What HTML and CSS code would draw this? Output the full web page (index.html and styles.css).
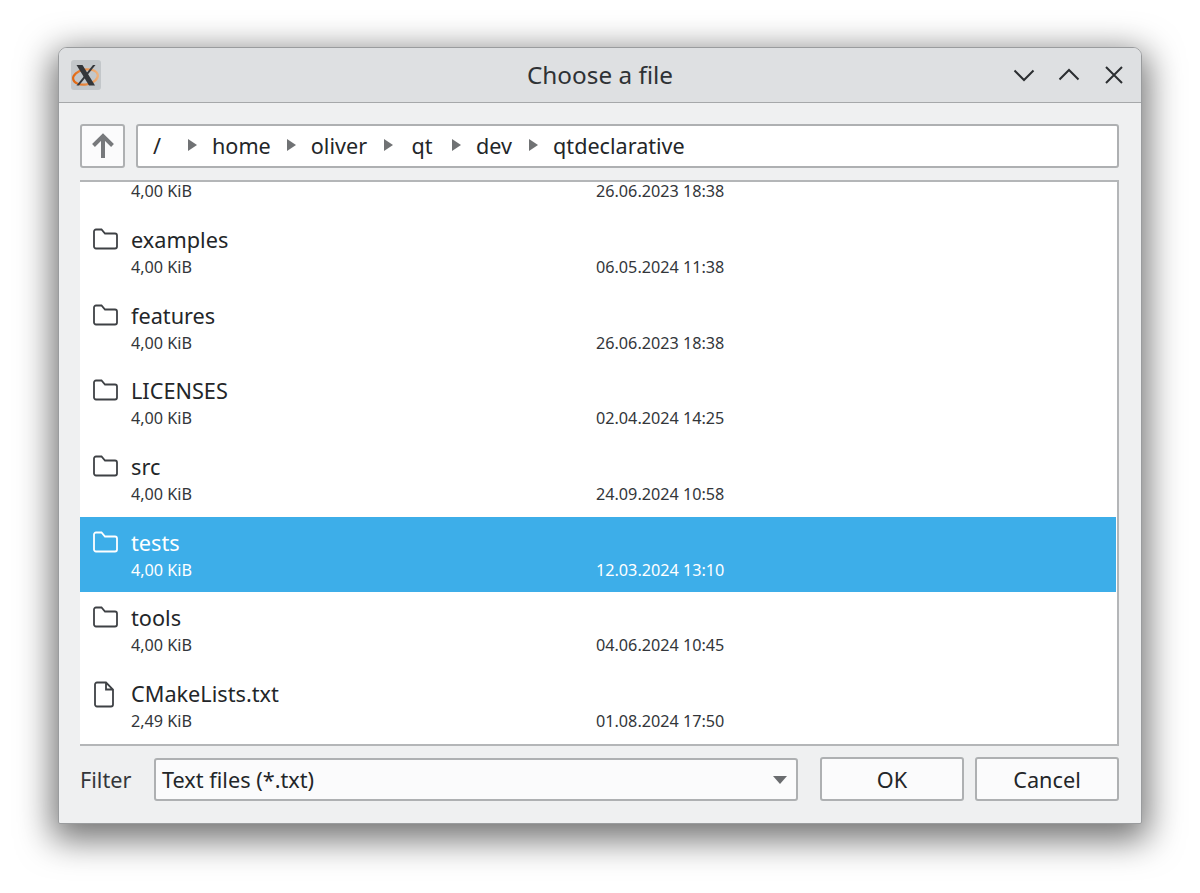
FILE: index.html
```html
<!DOCTYPE html>
<html lang="en">
<head>
<meta charset="utf-8">
<title>Choose a file</title>
<link rel="stylesheet" href="styles.css">
</head>
<body>
<div class="window">
  <header class="titlebar">
    <div class="app-icon">
      <svg viewBox="0 0 30 30" width="30" height="30">
        <defs>
          <linearGradient id="ring" x1="0" y1="0" x2="1" y2="0">
            <stop offset="0" stop-color="#e2660f"/>
            <stop offset="1" stop-color="#efb27c"/>
          </linearGradient>
        </defs>
        <ellipse cx="14.500" cy="17" rx="12.500" ry="7.500" fill="none" stroke="url(#ring)" stroke-width="2.200" transform="rotate(-10 14.500 17)"/>
        <path d="M5.500 5h6l12.500 20.500h-6z" fill="#33363a"/>
        <path d="M22 5h2.500L8 25.500H5.500z" fill="#33363a"/>
      </svg>
    </div>
    <div class="title">Choose a file</div>
    <div class="win-buttons">
      <svg class="win-btn" viewBox="0 0 24 24" width="24" height="24"><path d="M2.500 7.500 12 17l9.500-9.500"/></svg>
      <svg class="win-btn" viewBox="0 0 24 24" width="24" height="24"><path d="M2.500 16.500 12 7l9.500 9.500"/></svg>
      <svg class="win-btn" viewBox="0 0 24 24" width="24" height="24"><path d="M4 4l16 16M20 4 4 20"/></svg>
    </div>
  </header>
  <main class="content">
    <div class="nav">
      <div class="up-btn">
        <svg viewBox="0 0 26 30" width="26" height="30"><path d="M13 27V5M3.500 14.500 13 5l9.500 9.500" fill="none" stroke="#77797c" stroke-width="4"/></svg>
      </div>
      <div class="breadcrumb">
        <span class="crumb root">/</span><i class="sep"></i>
        <span class="crumb">home</span><i class="sep"></i>
        <span class="crumb padded">oliver</span><i class="sep"></i>
        <span class="crumb short">qt</span><i class="sep"></i>
        <span class="crumb padded">dev</span><i class="sep"></i>
        <span class="crumb">qtdeclarative</span>
      </div>
    </div>
    <div class="list">
      <div class="rows">
        <div class="row"><div class="icon"></div><div class="text"><div class="name"></div><div class="meta"><span class="size">4,00 KiB</span><span class="date">26.06.2023 18:38</span></div></div></div>
        <div class="row"><svg class="icon" viewBox="0 0 28 24" width="28" height="24"><path d="M3 6.500V3.500a2 2 0 0 1 2-2h5.500l3.500 4h10a2 2 0 0 1 2 2V18.500a2 2 0 0 1-2 2H5a2 2 0 0 1-2-2z"/></svg><div class="text"><div class="name">examples</div><div class="meta"><span class="size">4,00 KiB</span><span class="date">06.05.2024 11:38</span></div></div></div>
        <div class="row"><svg class="icon" viewBox="0 0 28 24" width="28" height="24"><path d="M3 6.500V3.500a2 2 0 0 1 2-2h5.500l3.500 4h10a2 2 0 0 1 2 2V18.500a2 2 0 0 1-2 2H5a2 2 0 0 1-2-2z"/></svg><div class="text"><div class="name">features</div><div class="meta"><span class="size">4,00 KiB</span><span class="date">26.06.2023 18:38</span></div></div></div>
        <div class="row"><svg class="icon" viewBox="0 0 28 24" width="28" height="24"><path d="M3 6.500V3.500a2 2 0 0 1 2-2h5.500l3.500 4h10a2 2 0 0 1 2 2V18.500a2 2 0 0 1-2 2H5a2 2 0 0 1-2-2z"/></svg><div class="text"><div class="name">LICENSES</div><div class="meta"><span class="size">4,00 KiB</span><span class="date">02.04.2024 14:25</span></div></div></div>
        <div class="row"><svg class="icon" viewBox="0 0 28 24" width="28" height="24"><path d="M3 6.500V3.500a2 2 0 0 1 2-2h5.500l3.500 4h10a2 2 0 0 1 2 2V18.500a2 2 0 0 1-2 2H5a2 2 0 0 1-2-2z"/></svg><div class="text"><div class="name">src</div><div class="meta"><span class="size">4,00 KiB</span><span class="date">24.09.2024 10:58</span></div></div></div>
        <div class="row selected"><svg class="icon" viewBox="0 0 28 24" width="28" height="24"><path d="M3 6.500V3.500a2 2 0 0 1 2-2h5.500l3.500 4h10a2 2 0 0 1 2 2V18.500a2 2 0 0 1-2 2H5a2 2 0 0 1-2-2z"/></svg><div class="text"><div class="name">tests</div><div class="meta"><span class="size">4,00 KiB</span><span class="date">12.03.2024 13:10</span></div></div></div>
        <div class="row"><svg class="icon" viewBox="0 0 28 24" width="28" height="24"><path d="M3 6.500V3.500a2 2 0 0 1 2-2h5.500l3.500 4h10a2 2 0 0 1 2 2V18.500a2 2 0 0 1-2 2H5a2 2 0 0 1-2-2z"/></svg><div class="text"><div class="name">tools</div><div class="meta"><span class="size">4,00 KiB</span><span class="date">04.06.2024 10:45</span></div></div></div>
        <div class="row"><svg class="icon" viewBox="0 0 28 26" width="28" height="26"><path d="M6 .5h9l7 7v15a2 2 0 0 1-2 2H6a2 2 0 0 1-2-2v-20a2 2 0 0 1 2-2zM15 .5v7h7"/></svg><div class="text"><div class="name">CMakeLists.txt</div><div class="meta"><span class="size">2,49 KiB</span><span class="date">01.08.2024 17:50</span></div></div></div>
      </div>
    </div>
    <div class="footer">
      <span class="filter-label">Filter</span>
      <div class="combo"><span>Text files (*.txt)</span><i class="caret"></i></div>
      <div class="btn">OK</div>
      <div class="btn">Cancel</div>
    </div>
  </main>
</div>
</body>
</html>
```

FILE: styles.css
```css
* { box-sizing: border-box; }
html, body { margin: 0; height: 100%; }
body {
  width: 1200px;
  height: 893px;
  padding: 47px 58px 69px;
  background: #ffffff;
  font-family: "Noto Sans", sans-serif;
  color: #232629;
  overflow: hidden;
}
.window {
  height: 777px;
  display: flex;
  flex-direction: column;
  border: 1px solid #9a9c9e;
  border-radius: 9px 9px 2px 2px;
  background: #eff0f1;
  box-shadow: 0 10px 34px 6px rgba(0, 0, 0, 0.55);
}
.titlebar {
  height: 55px;
  flex: none;
  display: flex;
  align-items: center;
  position: relative;
  padding: 0 15px 0 12px;
  background: #dee0e2;
  border-radius: 8px 8px 0 0;
  border-bottom: 1px solid #a6a8aa;
}
.app-icon {
  width: 30px;
  height: 30px;
  background: #c3c7ca;
  border-radius: 3px;
}
.app-icon svg { display: block; }
.title {
  position: absolute;
  left: 0;
  right: 0;
  top: 10px;
  text-align: center;
  font-size: 24.300px;
  line-height: 33px;
  color: #2f3235;
}
.win-buttons {
  margin-left: auto;
  display: flex;
  gap: 21px;
}
.win-btn path {
  fill: none;
  stroke: #2b2e31;
  stroke-width: 2;
}
.content {
  flex: 1;
  min-height: 0;
  display: flex;
  flex-direction: column;
  padding: 21px 22px 22px 21px;
}
.nav {
  display: flex;
  gap: 11px;
  height: 44px;
  flex: none;
}
.up-btn {
  width: 45px;
  height: 44px;
  background: #fbfbfc;
  border: 2px solid #aeb0b2;
  border-radius: 3px;
  display: flex;
  align-items: center;
  justify-content: center;
}
.breadcrumb {
  flex: 1;
  display: flex;
  align-items: center;
  height: 44px;
  padding-left: 15px;
  background: #fff;
  border: 2px solid #aeb0b2;
  border-radius: 3px;
  font-size: 21.600px;
}
.crumb { line-height: 30px; }
.root { width: 19px; }
.padded { margin-right: 1px; }
.short { min-width: 28px; text-align: center; }
.sep {
  width: 0;
  height: 0;
  border-left: 9px solid #707274;
  border-top: 6.500px solid transparent;
  border-bottom: 6.500px solid transparent;
  margin: 0 15px 2px 16px;
}
.list {
  flex: none;
  height: 566px;
  margin-top: 12px;
  background: #fff;
  border-top: 2px solid #b4b6b8;
  border-right: 2px solid #b4b6b8;
  border-bottom: 2px solid #b4b6b8;
  overflow: hidden;
}
.rows { margin: -43.700px 1px 0 0; }
.row {
  height: 75.700px;
  display: flex;
  align-items: flex-start;
  padding-left: 11px;
  position: relative;
}
.row .icon {
  flex: none;
  margin-top: 14px;
  fill: none;
  stroke: #3e4145;
  stroke-width: 1.800;
  width: 28px;
  overflow: visible;
}
.text { margin-left: 12px; flex: 1; padding-top: 9px; }
.name { font-size: 21.700px; line-height: 33px; min-height: 33px; }
.meta {
  display: flex;
  font-size: 16.200px;
  line-height: 22px;
  color: #33363a;
}
.size { width: 465px; }
.selected { background: #3daee9; color: #fff; }
.selected .meta { color: #fff; }
.selected .icon { stroke: #fff; }
.footer {
  flex: 1;
  display: flex;
  align-items: center;
  gap: 11px;
  margin-top: 11px;
}
.filter-label { font-size: 21.700px; width: 63px; color: #33363a; }
.combo {
  width: 644px;
  height: 43px;
  margin-top: 1px;
  display: flex;
  align-items: center;
  justify-content: space-between;
  padding: 0 9px 0 6px;
  background: #fbfbfc;
  border: 2px solid #aeb0b2;
  border-radius: 3px;
  font-size: 21.700px;
}
.caret {
  width: 0;
  height: 0;
  border-top: 8px solid #6a6c6f;
  border-left: 7.500px solid transparent;
  border-right: 7.500px solid transparent;
}
.btn {
  width: 144px;
  height: 44px;
  display: flex;
  align-items: center;
  justify-content: center;
  background: #fbfbfc;
  border: 2px solid #aeb0b2;
  border-radius: 3px;
  font-size: 21.700px;
}
.combo + .btn { margin-left: 11px; }
```
